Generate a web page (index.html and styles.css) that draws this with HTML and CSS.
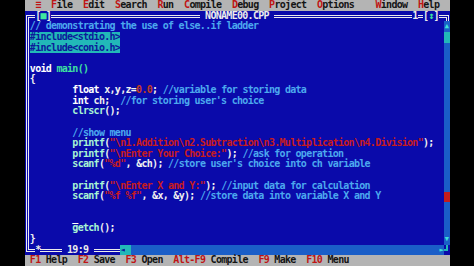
FILE: index.html
```html
<!DOCTYPE html>
<html>
<head>
<meta charset="utf-8">
<title>Turbo C++ - NONAME00.CPP</title>
<link rel="stylesheet" href="styles.css">
</head>
<body>
<div class="screen">
  <div class="menubar r">  <span class="hk">≡</span>  <span class="hk">F</span>ile  <span class="hk">E</span>dit  <span class="hk">S</span>earch  <span class="hk">R</span>un  <span class="hk">C</span>ompile  <span class="hk">D</span>ebug  <span class="hk">P</span>roject  <span class="hk">O</span>ptions    <span class="hk">W</span>indow  <span class="hk">H</span>elp</div>
  <div class="window">
    <div class="titlebar r"><span class="c-tl"><span class="o"><span class="i"></span></span></span><span class="hl w1"></span><span class="t">[<span class="grn">■</span>]</span><span class="hl g28"></span><span class="t"> NONAME00.CPP </span><span class="hl g26"></span><span class="t">1</span><span class="hl w1"></span><span class="t">[<span class="grn">↕</span>]</span><span class="hl w1"></span><span class="c-tr"><span class="o"><span class="i"></span></span></span></div>
    <div class="body">
      <div class="frame-left"><div class="vline"></div></div>
      <div class="code">
        <div class="r"><span class="cm">// demonstrating the use of else..if ladder</span></div>
        <div class="r"><span class="pp">#include&lt;stdio.h&gt;</span></div>
        <div class="r"><span class="pp">#include&lt;conio.h&gt;</span></div>
        <div class="r"></div>
        <div class="r"><span class="kw">void</span> <span class="mn">main()</span></div>
        <div class="r">{</div>
        <div class="r">        <span class="kw">float</span> x,y,z=<span class="num">0.0</span>; <span class="cm">//variable for storing data</span></div>
        <div class="r">        <span class="kw">int</span> ch;  <span class="cm">//for storing user's choice</span></div>
        <div class="r">        <span class="fn">clrscr</span>();</div>
        <div class="r"></div>
        <div class="r">        <span class="cm">//show menu</span></div>
        <div class="r">        <span class="fn">printf</span>(<span class="str">"\n1.Addition\n2.Subtraction\n3.Multiplication\n4.Division"</span>);</div>
        <div class="r">        <span class="fn">printf</span>(<span class="str">"\nEnter Your Choice:"</span>); <span class="cm">//ask for operation</span></div>
        <div class="r">        <span class="fn">scanf</span>(<span class="str">"%d"</span>, &amp;ch); <span class="cm">//store user's choice into ch variable</span></div>
        <div class="r"></div>
        <div class="r">        <span class="fn">printf</span>(<span class="str">"\nEnter X and Y:"</span>); <span class="cm">//input data for calculation</span></div>
        <div class="r">        <span class="fn">scanf</span>(<span class="str">"%f %f"</span>, &amp;x, &amp;y); <span class="cm">//store data into variable X and Y</span></div>
        <div class="r"></div>
        <div class="r">        <span class="cur">_</span></div>
        <div class="r">        <span class="fn">getch</span>();</div>
        <div class="r">}</div>
      </div>
      <div class="vscroll">
        <div class="cell arrow">▲</div>
        <div class="cell thumb"></div>
        <div class="track t14"></div>
        <div class="cell mouse"></div>
        <div class="track t3"></div>
        <div class="cell arrow">▼</div>
      </div>
    </div>
    <div class="bottombar r"><span class="c-bl"><span class="o"><span class="i"></span></span></span><span class="hl w1"></span><span class="t">*</span><span class="hl w4"></span><span class="t"> 19:9 </span><span class="hl w5"></span><span class="hscroll"><span class="cell larrow">◄</span><span class="cell hthumb"></span><span class="htrack"></span><span class="cell arrow">►</span></span><span class="c-br"><span class="o"></span></span></div>
  </div>
  <div class="statusbar r"> <span class="hk">F1</span> Help  <span class="hk">F2</span> Save  <span class="hk">F3</span> Open  <span class="hk">Alt-F9</span> Compile  <span class="hk">F9</span> Make  <span class="hk">F10</span> Menu</div>
</div>
</body>
</html>
```

FILE: styles.css
```css
:root {
  --c: 5.3125px;
  --h: 10.64px;
  --blue: #0a0aaa;
  --gray: #b4b4b4;
  --frame: #ececec;
  --cyan: #22b8b8;
  --track: #1a5ec8;
}

* {
  box-sizing: border-box;
  margin: 0;
  padding: 0;
}

html, body {
  background: #000;
  height: 100%;
}

body {
  display: flex;
  justify-content: center;
  overflow: hidden;
}

.screen {
  width: 425px;
  height: 266px;
  background: var(--blue);
  color: #f0f0f0;
  font-family: "DejaVu Sans Mono", monospace;
  font-weight: bold;
  font-size: 10px;
  line-height: var(--h);
  letter-spacing: -0.708px;
  display: flex;
  flex-direction: column;
}

.r {
  height: var(--h);
  white-space: pre;
  flex: none;
}

/* menu + status bars */
.menubar,
.statusbar {
  background: var(--gray);
  color: #141414;
}

.hk {
  color: #c01414;
}

/* window */
.window {
  flex: 1;
  display: flex;
  flex-direction: column;
}

.titlebar,
.bottombar {
  display: flex;
  color: var(--frame);
}

.t {
  white-space: pre;
  flex: none;
}

.grn {
  color: #3ee6a0;
}

.hl {
  align-self: flex-start;
  margin-top: 4px;
  height: 3px;
  border-top: 1px solid var(--frame);
  border-bottom: 1px solid var(--frame);
}

.w1 { width: var(--c); flex: none; }
.w4 { width: calc(var(--c) * 4); flex: none; }
.w5 { width: calc(var(--c) * 5); flex: none; }
.g28 { flex: 28 1 0; }
.g26 { flex: 26 1 0; }

/* corners */
.c-tl,
.c-tr,
.c-bl,
.c-br {
  width: var(--c);
  flex: none;
  display: flex;
  flex-direction: column;
}

.c-tl .o {
  flex: 1;
  margin: 4px 0 0 1px;
  padding: 1px 0 0 1px;
  border-top: 1px solid var(--frame);
  border-left: 1px solid var(--frame);
  display: flex;
}

.c-tl .i {
  flex: 1;
  border-top: 1px solid var(--frame);
  border-left: 1px solid var(--frame);
}

.c-tr .o {
  flex: 1;
  margin: 4px 1px 0 0;
  padding: 1px 1px 0 0;
  border-top: 1px solid var(--frame);
  border-right: 1px solid var(--frame);
  display: flex;
}

.c-tr .i {
  flex: 1;
  border-top: 1px solid var(--frame);
  border-right: 1px solid var(--frame);
}

.c-bl .o {
  height: 7px;
  margin-left: 1px;
  padding: 0 0 1px 1px;
  border-left: 1px solid var(--frame);
  border-bottom: 1px solid var(--frame);
  display: flex;
}

.c-bl .i {
  flex: 1;
  border-left: 1px solid var(--frame);
  border-bottom: 1px solid var(--frame);
}

.c-br .o {
  height: 6px;
  margin-right: 2px;
  border-right: 2px solid var(--cyan);
  border-bottom: 2px solid var(--cyan);
}

/* editor body */
.body {
  flex: 1;
  display: flex;
}

.frame-left {
  width: var(--c);
  flex: none;
}

.vline {
  margin-left: 1px;
  width: 3px;
  height: 100%;
  border-left: 1px solid var(--frame);
  border-right: 1px solid var(--frame);
}

.code {
  flex: 1;
  display: flex;
  flex-direction: column;
}

.kw { color: #ffffff; }
.mn { color: #3ee0a0; }
.fn { color: #a8f4d4; }
.str { color: #c81c1c; }
.num { color: #c23c22; }
.cm { color: #4ca8ee; }
.cur { color: #ffffff; vertical-align: 2px; }

.pp {
  display: inline-block;
  height: var(--h);
  background: var(--cyan);
  color: #0c1a9a;
}

/* scroll bars */
.vscroll {
  width: var(--c);
  flex: none;
  background: var(--track);
  display: flex;
  flex-direction: column;
}

.cell {
  height: var(--h);
  width: var(--c);
  flex: none;
  text-align: center;
  letter-spacing: 0;
  font-size: 7px;
}

.arrow {
  color: #3ee0d8;
}

.thumb,
.hthumb {
  background: var(--cyan);
}

.mouse {
  background: #c41c1c;
}

.track { flex-basis: 0; }
.t14 { flex-grow: 14; }
.t3 { flex-grow: 3; }

.hscroll {
  flex: 1;
  display: flex;
  background: var(--track);
}

.larrow {
  background: var(--cyan);
  color: #0c1a9a;
}

.htrack {
  flex: 1;
}
```
